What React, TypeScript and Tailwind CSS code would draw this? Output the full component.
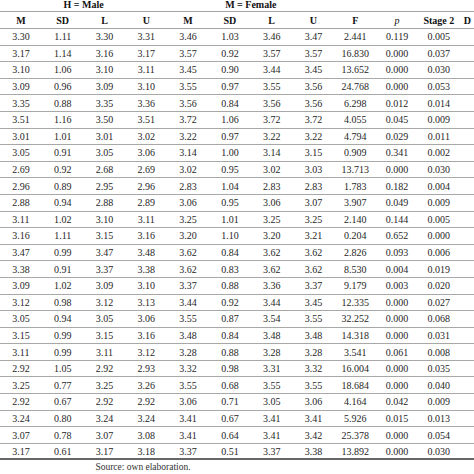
import React from 'react';

const rows: string[][] = [
  ['3.30', '1.11', '3.30', '3.31', '3.46', '1.03', '3.46', '3.47', '2.441', '0.119', '0.005'],
  ['3.17', '1.14', '3.16', '3.17', '3.57', '0.92', '3.57', '3.57', '16.830', '0.000', '0.037'],
  ['3.10', '1.06', '3.10', '3.11', '3.45', '0.90', '3.44', '3.45', '13.652', '0.000', '0.030'],
  ['3.09', '0.96', '3.09', '3.10', '3.55', '0.97', '3.55', '3.56', '24.768', '0.000', '0.053'],
  ['3.35', '0.88', '3.35', '3.36', '3.56', '0.84', '3.56', '3.56', '6.298', '0.012', '0.014'],
  ['3.51', '1.16', '3.50', '3.51', '3.72', '1.06', '3.72', '3.72', '4.055', '0.045', '0.009'],
  ['3.01', '1.01', '3.01', '3.02', '3.22', '0.97', '3.22', '3.22', '4.794', '0.029', '0.011'],
  ['3.05', '0.91', '3.05', '3.06', '3.14', '1.00', '3.14', '3.15', '0.909', '0.341', '0.002'],
  ['2.69', '0.92', '2.68', '2.69', '3.02', '0.95', '3.02', '3.03', '13.713', '0.000', '0.030'],
  ['2.96', '0.89', '2.95', '2.96', '2.83', '1.04', '2.83', '2.83', '1.783', '0.182', '0.004'],
  ['2.88', '0.94', '2.88', '2.89', '3.06', '0.95', '3.06', '3.07', '3.907', '0.049', '0.009'],
  ['3.11', '1.02', '3.10', '3.11', '3.25', '1.01', '3.25', '3.25', '2.140', '0.144', '0.005'],
  ['3.16', '1.11', '3.15', '3.16', '3.20', '1.10', '3.20', '3.21', '0.204', '0.652', '0.000'],
  ['3.47', '0.99', '3.47', '3.48', '3.62', '0.84', '3.62', '3.62', '2.826', '0.093', '0.006'],
  ['3.38', '0.91', '3.37', '3.38', '3.62', '0.83', '3.62', '3.62', '8.530', '0.004', '0.019'],
  ['3.09', '1.02', '3.09', '3.10', '3.37', '0.88', '3.36', '3.37', '9.179', '0.003', '0.020'],
  ['3.12', '0.98', '3.12', '3.13', '3.44', '0.92', '3.44', '3.45', '12.335', '0.000', '0.027'],
  ['3.05', '0.94', '3.05', '3.06', '3.55', '0.87', '3.54', '3.55', '32.252', '0.000', '0.068'],
  ['3.15', '0.99', '3.15', '3.16', '3.48', '0.84', '3.48', '3.48', '14.318', '0.000', '0.031'],
  ['3.11', '0.99', '3.11', '3.12', '3.28', '0.88', '3.28', '3.28', '3.541', '0.061', '0.008'],
  ['2.92', '1.05', '2.92', '2.93', '3.32', '0.98', '3.31', '3.32', '16.004', '0.000', '0.035'],
  ['3.25', '0.77', '3.25', '3.26', '3.55', '0.68', '3.55', '3.55', '18.684', '0.000', '0.040'],
  ['2.92', '0.67', '2.92', '2.92', '3.06', '0.71', '3.05', '3.06', '4.164', '0.042', '0.009'],
  ['3.24', '0.80', '3.24', '3.24', '3.41', '0.67', '3.41', '3.41', '5.926', '0.015', '0.013'],
  ['3.07', '0.78', '3.07', '3.08', '3.41', '0.64', '3.41', '3.42', '25.378', '0.000', '0.054'],
  ['3.17', '0.61', '3.17', '3.18', '3.37', '0.51', '3.37', '3.38', '13.892', '0.000', '0.030'],
];

const heads = ['M', 'SD', 'L', 'U', 'M', 'SD', 'L', 'U', 'F', 'p', 'Stage 2'];

export default function App() {
  return (
    <div className="w-[474px] h-[474px] overflow-hidden bg-white font-['Liberation_Serif',serif] text-[10px] text-[#262626]">
      {/* group header */}
      <div className="grid grid-cols-[repeat(12,41.8px)] h-[12px] border-b-[1.5px] border-[#a3a3a3] font-bold text-[#111] leading-[10px]">
        <div className="col-span-4 text-center">H = Male</div>
        <div className="col-span-4 text-center">M = Female</div>
      </div>

      {/* column header */}
      <div className="grid grid-cols-[repeat(12,41.8px)] h-[17px] border-b-[1.5px] border-[#a3a3a3] font-bold text-[#111] items-center">
        {heads.map((h, i) => (
          <div key={i} className={`text-center ${h === 'p' ? 'italic font-normal' : ''}`}>{h}</div>
        ))}
        <div className="pl-[4px] whitespace-nowrap">D</div>
      </div>

      {/* data */}
      {rows.map((r, ri) => (
        <div
          key={ri}
          className={`grid grid-cols-[repeat(12,41.8px)] h-[16.6px] items-center ${
            ri === rows.length - 1 ? 'border-b-2 border-[#666]' : 'border-b-[1.5px] border-[#a8a8a8]'
          }`}
        >
          {r.map((v, ci) => (
            <div key={ci} className="text-center">{v}</div>
          ))}
          <div />
        </div>
      ))}

      <div className="w-[286px] text-center text-[9.5px] leading-[12px] mt-[1px] text-[#333]">Source: own elaboration.</div>
    </div>
  );
}
